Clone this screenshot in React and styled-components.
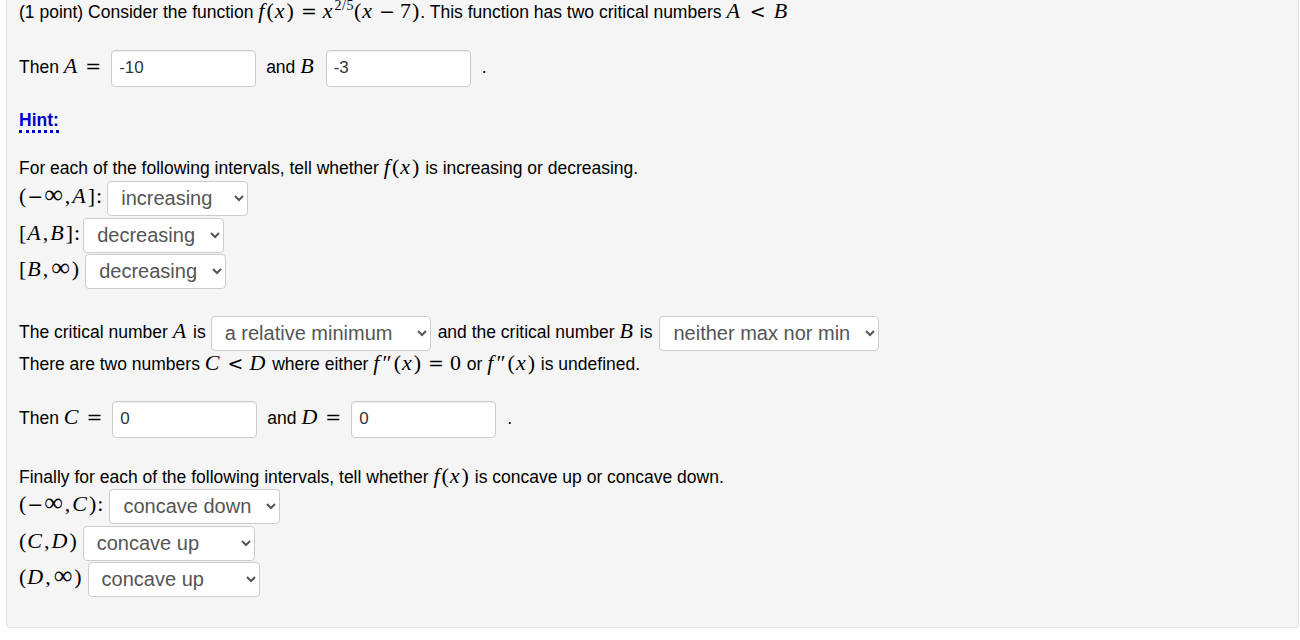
import React from 'react';
import styled, { createGlobalStyle } from 'styled-components';

const Global = createGlobalStyle`
  html, body { margin: 0; padding: 0; background: #ffffff; }
  body {
    font-family: "Liberation Sans", Arial, sans-serif;
    font-size: 17.5px;
    color: #000;
  }
`;

const Well = styled.div`
  margin: 0 1px 0 6px;
  background: #f5f5f5;
  border: 1px solid #e3e3e3;
  border-top: none;
  border-radius: 0 0 4px 4px;
  padding: 0 12px 31px 12px;
`;

const Line = styled.div`
  height: ${p => p.$lh || 24}px;
  line-height: ${p => p.$lh || 24}px;
  margin-top: ${p => p.$mt || 0}px;
  white-space: nowrap;
`;

const M = styled.span`
  font-family: "Liberation Serif", "Times New Roman", serif;
  font-size: 22px;
  letter-spacing: 1px;
  line-height: 1;
`;

const V = styled.i`
  font-style: italic;
  padding-right: 1px;
`;

const Op = styled.span`
  font-family: "DejaVu Serif", serif;
  font-size: 19px;
  letter-spacing: 0;
  margin: 0 ${p => p.$m ?? 6}px;
`;

const Comma = styled.span`
  margin-right: 1px;
`;

const Inf = styled.span`
  font-size: 26px;
  line-height: 0;
  margin: 0 1px;
`;

const Prime = styled.span`
  margin: 0 1px;
`;

const Sup = styled.sup`
  font-size: 14px;
  letter-spacing: 0.5px;
  vertical-align: 8px;
  line-height: 0;
  font-style: normal;
`;

const Hint = styled.span`
  color: #0000cc;
  font-weight: bold;
  border-bottom: 3px dotted #0000cc;
  cursor: pointer;
`;

const Field = styled.input`
  box-sizing: border-box;
  width: 145px;
  height: 37px;
  padding: 4px 7px;
  margin: 0 ${p => p.$mr ?? 10}px 0 ${p => p.$ml ?? 4}px;
  font-family: "Liberation Sans", Arial, sans-serif;
  font-size: 17px;
  color: #333;
  background: #fff;
  border: 1px solid #cccccc;
  border-radius: 4px;
  box-shadow: inset 0 1px 1px rgba(0, 0, 0, 0.075);
  vertical-align: middle;
  outline: none;
`;

const Drop = styled.select`
  box-sizing: border-box;
  width: ${p => p.$w}px;
  height: 35px;
  margin: 0 ${p => p.$mr ?? 0}px 0 ${p => p.$ml ?? 4}px;
  padding: 0 12px 0 9px;
  font-family: "Liberation Sans", Arial, sans-serif;
  font-size: 20px;
  color: #555;
  background-color: #fff;
  border: 1px solid #cccccc;
  border-radius: 4px;
  vertical-align: middle;
  outline: none;
`;

const Row = styled.div`
  height: ${p => p.$h || 35}px;
  line-height: ${p => p.$h || 35}px;
  margin-top: ${p => p.$mt || 0}px;
  white-space: nowrap;
`;

const Choice = ({ w, value, options, ml, mr }) => (
  <Drop $w={w} $ml={ml} $mr={mr} defaultValue={value}>
    <option value="?">?</option>
    {options.map(o => (
      <option key={o} value={o}>{o}</option>
    ))}
  </Drop>
);

const mono = ['increasing', 'decreasing'];
const conc = ['concave up', 'concave down'];
const crit = ['a relative minimum', 'a relative maximum', 'neither max nor min'];

const Fx = ({ prime }) => (
  <>
    <V>f</V>{prime && <Prime>″</Prime>}(<V>x</V>)
  </>
);

export default function App() {
  return (
    <>
      <Global />
      <Well>
        <Line $lh={21}>
          (1 point) Consider the function{' '}
          <M>
            <Fx /><Op>=</Op><V>x</V><Sup>2/5</Sup>(<V>x</V><Op $m={5}>−</Op>7)
          </M>
          . This function has two critical numbers{' '}
          <M><V>A</V><Op $m={8}>&lt;</Op><V>B</V></M>
        </Line>

        <Row $h={37} $mt={28}>
          Then <M><V>A</V><Op>=</Op></M>
          <Field defaultValue="-10" />
          and <M><V>B</V></M>
          <Field defaultValue="-3" $ml={10} $mr={11} />.
        </Row>

        <Line $mt={22}>
          <Hint>Hint:</Hint>
        </Line>

        <Line $lh={22} $mt={24}>
          For each of the following intervals, tell whether <M><Fx /></M> is increasing or decreasing.
        </Line>
        <Row $mt={2}>
          <M>(<Op $m={0}>−</Op><Inf>∞</Inf><Comma>,</Comma><V>A</V>]:</M>
          <Choice w={141} value="increasing" options={mono} />
        </Row>
        <Row $mt={2}>
          <M>[<V>A</V><Comma>,</Comma><V>B</V>]:</M>
          <Choice w={141} value="decreasing" options={mono} ml={2} />
        </Row>
        <Row $mt={1}>
          <M>[<V>B</V><Comma>,</Comma><Inf>∞</Inf>)</M>
          <Choice w={141} value="decreasing" options={mono} ml={5} />
        </Row>

        <Row $mt={27}>
          The critical number <M><V>A</V></M> is
          <Choice w={220} value="a relative minimum" options={crit} ml={5} mr={7} />
          and the critical number <M><V>B</V></M> is
          <Choice w={220} value="neither max nor min" options={crit} ml={7} />
        </Row>
        <Line $mt={2}>
          There are two numbers <M><V>C</V><Op>&lt;</Op><V>D</V></M> where either{' '}
          <M><Fx prime /><Op>=</Op>0</M> or <M><Fx prime /></M> is undefined.
        </Line>

        <Row $h={37} $mt={24}>
          Then <M><V>C</V><Op>=</Op></M>
          <Field defaultValue="0" />
          and <M><V>D</V><Op>=</Op></M>
          <Field defaultValue="0" $mr={11} />.
        </Row>

        <Line $lh={22} $mt={28}>
          Finally for each of the following intervals, tell whether <M><Fx /></M> is concave up or concave down.
        </Line>
        <Row $mt={1}>
          <M>(<Op $m={0}>−</Op><Inf>∞</Inf><Comma>,</Comma><V>C</V>):</M>
          <Choice w={171} value="concave down" options={conc} ml={5} />
        </Row>
        <Row $mt={2}>
          <M>(<V>C</V><Comma>,</Comma><V>D</V>)</M>
          <Choice w={172} value="concave up" options={conc} ml={5} />
        </Row>
        <Row $mt={1}>
          <M>(<V>D</V><Comma>,</Comma><Inf>∞</Inf>)</M>
          <Choice w={172} value="concave up" options={conc} ml={5} />
        </Row>
      </Well>
    </>
  );
}
